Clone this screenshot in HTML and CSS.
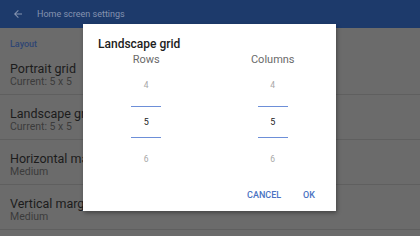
FILE: index.html
```html
<!DOCTYPE html>
<html lang="en">
<head>
    <meta charset="UTF-8">
    <title>Home screen settings</title>
    <link rel="stylesheet" href="styles.css">
</head>
<body>

    <div class="screen">
        <div class="appbar">
            <svg class="back" width="12" height="12" viewBox="0 0 24 24">
                <path d="M20 11H7.83l5.59-5.59L12 4l-8 8 8 8 1.41-1.41L7.83 13H20v-2z" fill="currentColor"/>
            </svg>
            <span class="appbar-title">Home screen settings</span>
        </div>

        <div class="section">Layout</div>

        <div class="item">
            <div class="item-title">Portrait grid</div>
            <div class="item-sub">Current: 5 x 5</div>
        </div>
        <div class="item">
            <div class="item-title">Landscape grid</div>
            <div class="item-sub">Current: 5 x 5</div>
        </div>
        <div class="item">
            <div class="item-title">Horizontal margin</div>
            <div class="item-sub">Medium</div>
        </div>
        <div class="item">
            <div class="item-title">Vertical margin</div>
            <div class="item-sub">Medium</div>
        </div>

        <div class="dialog">
            <div class="dialog-title">Landscape grid</div>
            <div class="pickers">
                <div class="picker">
                    <div class="picker-label">Rows</div>
                    <div class="num dim top">4</div>
                    <div class="line"></div>
                    <div class="num sel">5</div>
                    <div class="line"></div>
                    <div class="num dim bottom">6</div>
                </div>
                <div class="picker">
                    <div class="picker-label">Columns</div>
                    <div class="num dim top">4</div>
                    <div class="line"></div>
                    <div class="num sel">5</div>
                    <div class="line"></div>
                    <div class="num dim bottom">6</div>
                </div>
            </div>
            <div class="actions">
                <span class="btn">CANCEL</span>
                <span class="btn">OK</span>
            </div>
        </div>
    </div>

</body>
</html>
```

FILE: styles.css
```css
body {
    margin: 0;
    font-family: Roboto, "Liberation Sans", sans-serif;
    background-color: #6b6b6b;
}
.screen {
    position: relative;
    width: 420px;
    height: 236px;
    overflow: hidden;
    background-color: #6b6b6b;
}

.appbar {
    display: flex;
    align-items: center;
    height: 28px;
    padding-left: 12px;
    background-color: #1d3a6b;
    color: #8593b0;
}
.back {
    margin-right: 13px;
}
.appbar-title {
    font-size: 9px;
}

.section {
    height: 22px;
    line-height: 32px;
    padding-left: 10px;
    font-size: 9px;
    font-weight: 500;
    color: #2f4674;
}

.item {
    height: 45px;
    padding: 12px 0 0 10px;
    box-sizing: border-box;
    border-bottom: 1px solid #5f5f5f;
}
.item-title {
    font-size: 12.5px;
    line-height: 14px;
    color: #1c1c1c;
}
.item-sub {
    font-size: 10.5px;
    line-height: 12px;
    color: #3b3b3b;
}

/* dialog sits over the list */
.dialog {
    position: absolute;
    left: 83px;
    top: 24px;
    width: 253px;
    height: 187px;
    background-color: #fff;
    box-shadow: 1px 2px 4px rgba(0, 0, 0, 0.35);
    display: flex;
    flex-direction: column;
}
.dialog-title {
    padding: 12px 0 0 15px;
    font-size: 12px;
    line-height: 16px;
    font-weight: 500;
    color: #212121;
}

.pickers {
    display: grid;
    grid-template-columns: 1fr 1fr;
}
.picker {
    display: flex;
    flex-direction: column;
    align-items: center;
}
.picker-label {
    margin-top: 1px;
    font-size: 11px;
    line-height: 14px;
    color: #6a6a6a;
}
.num {
    font-size: 8.5px;
    line-height: 12px;
    height: 12px;
}
.num.dim {
    color: #a8a8a8;
}
.num.top {
    margin-top: 12px;
    margin-bottom: 15px;
}
.num.bottom {
    margin-top: 15px;
}
.num.sel {
    height: 30px;
    line-height: 30px;
    font-size: 9px;
    color: #222;
}
.line {
    width: 30px;
    height: 1px;
    background-color: #6d8fd8;
}

.actions {
    display: flex;
    justify-content: flex-end;
    gap: 22px;
    margin-top: auto;
    padding: 0 21px 11px 0;
}
.btn {
    font-size: 9px;
    font-weight: 500;
    color: #4a73c2;
}
```
